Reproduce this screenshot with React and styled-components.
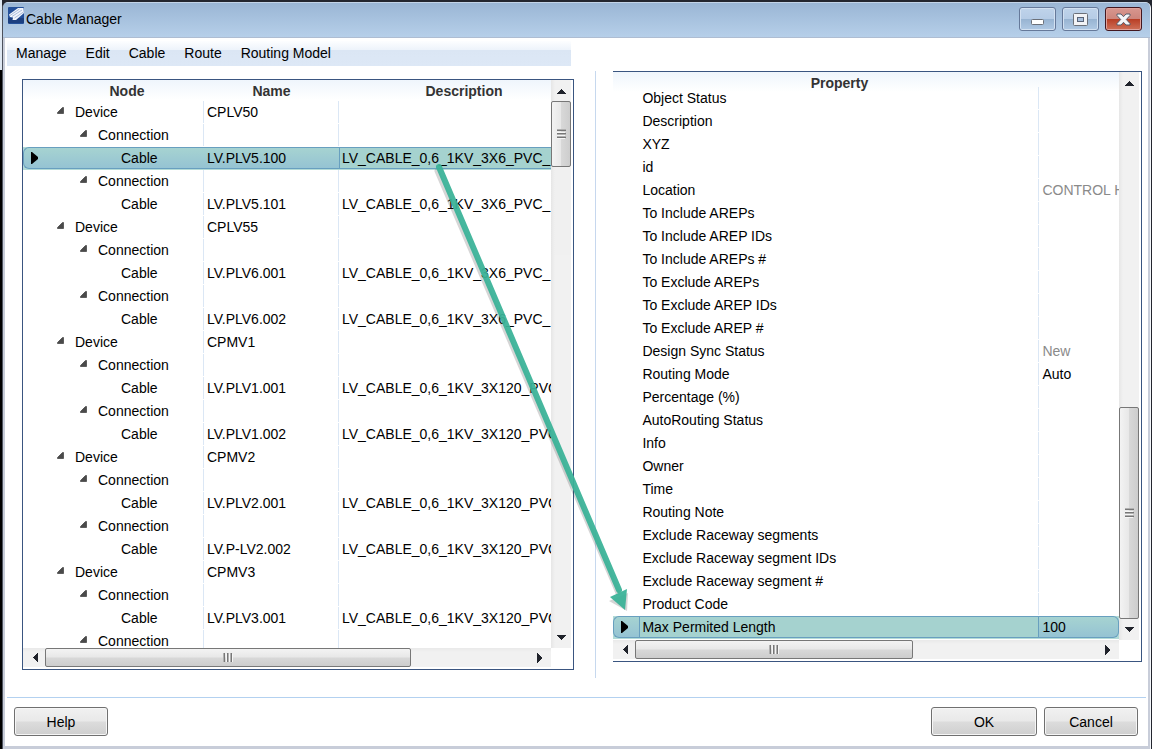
import React, { useState } from 'react';
import styled, { createGlobalStyle, css } from 'styled-components';

const GlobalStyle = createGlobalStyle`
  * {
    box-sizing: border-box;
  }

  body {
    margin: 0;
    font-family: 'Liberation Sans', Arial, sans-serif;
    font-size: 14px;
    color: #000;
  }

  button {
    font: inherit;
    color: inherit;
  }
`;

const Desktop = styled.div`
  height: 100vh;
  min-height: 400px;
  padding: 2px 1px 0 2px;
  background: linear-gradient(#dfe8f2 0 70px, #000 70px) left / 2px 100% no-repeat, #23262f;
`;

const Window = styled.div`
  height: 100%;
  display: flex;
  flex-direction: column;
  border-left: 1px solid #4c515c;
  border-right: 1px solid #f4f7fb;
  border-radius: 6px 6px 0 0;
  background: #c8cdd9;
  overflow: hidden;
`;

const TitleBar = styled.header`
  flex: none;
  height: 36px;
  display: flex;
  align-items: flex-start;
  padding: 4px 8px 0 5px;
  border-top: 1px solid #c3d4e8;
  border-bottom: 1px solid #aebdd2;
  background: linear-gradient(#9ab6d5, #b6cfe9);
`;

const Title = styled.h1`
  flex: 1;
  margin: 0;
  padding-left: 2px;
  font-size: 14px;
  font-weight: normal;
  line-height: 25px;
`;

const CaptionButtons = styled.div`
  display: flex;
  gap: 6px;
`;

const CaptionButton = styled.button`
  width: 37px;
  height: 24px;
  padding: 0;
  display: flex;
  align-items: center;
  justify-content: center;
  border: 1px solid ${({ $close }) => ($close ? '#43171f' : '#66799a')};
  border-radius: 3px;
  box-shadow: inset 0 0 0 1px ${({ $close }) => ($close ? '#dfa29c' : '#d3e1f1')};
  background: ${({ $close }) =>
    $close
      ? 'linear-gradient(#d8978f 0, #cd857c 48%, #b93f26 52%, #cf7159 100%)'
      : 'linear-gradient(#bfd3ea 0, #b6cce6 48%, #98b4d2 52%, #b0c9e4 100%)'};
`;

const Client = styled.div`
  flex: 1;
  min-height: 0;
  margin: 0 2px 3px;
  display: flex;
  flex-direction: column;
  background: #fff;
`;

const MenuBar = styled.nav`
  flex: none;
  width: calc(50% - 8px);
  height: 25px;
  margin: 3px 0 0 2px;
  display: flex;
  align-items: flex-start;
  gap: 1px;
  background: linear-gradient(#fdfeff 0, #edf3fb 9px, #dbe6f4 9px, #dde8f6 100%);
`;

const MenuItem = styled.button`
  height: 24px;
  padding: 0 9px;
  border: none;
  background: none;
  white-space: nowrap;
`;

const Workspace = styled.main`
  position: relative;
  flex: 1;
  min-height: 0;
  display: flex;
  padding: 5px 6px 19px 17px;
`;

const Splitter = styled.div`
  flex: none;
  width: 1px;
  margin: 0 17px 0 21px;
  background: #c6d8ee;
`;

const Panel = styled.section`
  flex: ${({ $grow }) => $grow} 1 0;
  min-width: 0;
  display: grid;
  grid-template-columns: minmax(0, 1fr) 20px;
  grid-template-rows: minmax(0, 1fr) 19px;
  margin: ${({ $low }) => ($low ? '8px 0' : '0 0 16px')};
  padding: 0 2px 2px 0;
  border: 1px solid #3a5580;
  ${({ $openLeft }) => $openLeft && 'border-left: none;'}
`;

const TableView = styled.div`
  overflow: hidden;
`;

const Table = styled.table`
  width: ${({ $width }) => $width};
  table-layout: fixed;
  border-collapse: separate;
  border-spacing: 0;
  background: linear-gradient(#eff5fc, #fff 20px) no-repeat;

  td,
  th {
    padding: 0;
  }
`;

const HeaderLabel = styled.div`
  height: ${({ $compact }) => ($compact ? 15 : 21)}px;
  padding-top: 2px;
  font-weight: bold;
  line-height: 18px;
  text-align: center;
  color: #333;
`;

const selectedCell = css`
  border: 0 solid #689fbf;
  border-width: 1px 0;
  line-height: 21px;
  background: ${({ $flat }) => ($flat ? '#a5d2cf' : 'linear-gradient(#a6d3d1, #95c3d3)')};
  ${({ $flat }) => $flat && 'border-left-width: 1px; border-right-width: 1px; padding-left: 2px;'}
  ${({ $start }) => $start && 'border-left-width: 1px; border-radius: 6px 0 0 6px;'}
  ${({ $end }) => $end && 'border-right-width: 1px; border-radius: 0 6px 6px 0;'}
`;

const Cell = styled.div`
  height: 22px;
  padding-left: ${({ $flush }) => ($flush ? 0 : 3)}px;
  line-height: 23px;
  white-space: nowrap;
  overflow: hidden;
  color: ${({ $muted }) => ($muted ? '#8a8a8a' : 'inherit')};
  ${({ $line }) => $line && 'border-right: 1px solid #dbe7f5;'}
  ${({ $selected }) => $selected && selectedCell}
`;

const Row = styled.tr`
  height: 23px;

  td {
    height: 23px;
    vertical-align: top;
    background: ${({ $selected }) => ($selected ? '#b3dbd7' : 'none')};
  }
`;

const NodeLabel = styled.span`
  display: flex;
  padding-left: ${({ $level }) => 6 + $level * 23}px;
`;

const Toggle = styled.button`
  width: 19px;
  padding: 0;
  display: flex;
  align-items: flex-start;
  border: none;
  background: none;

  svg {
    margin-top: 5px;
  }
`;

const ToggleSpace = styled.span`
  width: 19px;
`;

const Marker = styled.svg`
  display: block;
  margin: 4px 0 0 7px;
`;

const Bar = styled.div`
  display: flex;
  flex-direction: ${({ $vertical }) => ($vertical ? 'column' : 'row')};
  padding: ${({ $vertical }) => ($vertical ? '1px 0' : '0 2px')};
  background: ${({ $vertical }) =>
    $vertical ? 'linear-gradient(90deg, #e6e6e6, #f1f1f1 4px)' : 'linear-gradient(#e9e9e9, #f1f1f1 4px)'};
`;

const ArrowButton = styled.button`
  flex: 0 0 20px;
  min-height: 19px;
  padding: 0;
  display: flex;
  align-items: center;
  justify-content: center;
  border: none;
  background: none;
`;

const Track = styled.div`
  flex: ${({ $size }) => $size} 1 0;
`;

const Thumb = styled.div`
  flex: ${({ $size }) => $size} 1 0;
  display: flex;
  align-items: center;
  justify-content: center;
  border: 1px solid #777;
  border-radius: 2px;
  background: linear-gradient(
    ${({ $vertical }) => ($vertical ? '90deg' : '180deg')},
    #f3f3f3 0,
    #e8e8e8 48%,
    #d8d8d8 52%,
    #cdcdcd 100%
  );

  svg {
    transform: rotate(${({ $vertical }) => ($vertical ? 90 : 0)}deg);
  }
`;

const LinkArrow = styled.svg`
  position: absolute;
  left: 421px;
  top: 96px;
  pointer-events: none;
`;

const Footer = styled.footer`
  flex: none;
  display: flex;
  gap: 7px;
  margin: 0 2px;
  padding: 9px 8px 10px 7px;
  border-top: 1px solid #b3d1f0;
`;

const PushButton = styled.button`
  width: ${({ $wide }) => ($wide ? 106 : 94)}px;
  height: 29px;
  padding: 0;
  border: 1px solid #707070;
  border-radius: 3px;
  box-shadow: inset 0 0 0 1px #f6f6f6;
  background: linear-gradient(#f1f1f1 0, #e9e9e9 48%, #dcdcdc 52%, #cfcfcf 100%);
  ${({ $first }) => $first && 'margin-right: auto;'}
`;

const arrowShapes = {
  up: 'M4 0h1v1h1v1h1v1h1v1h1v1H0V4h1V3h1V2h1V1h1z',
  down: 'M0 0h9v1H8v1H7v1H6v1H5v1H4V4H3V3H2V2H1V1H0z',
  left: 'M5 0v9H4V8H3V7H2V6H1V5H0V4h1V3h1V2h1V1h1V0z',
  right: 'M0 0h1v1h1v1h1v1h1v1h1v2H4v1H3v1H2v1H1v1H0z',
};

const ScrollArrow = ({ dir }) => {
  const vertical = dir === 'up' || dir === 'down';
  return (
    <ArrowButton type="button" aria-label={`Scroll ${dir}`}>
      <svg width={vertical ? 9 : 5} height={vertical ? 5 : 10} fill="#20232b">
        <path d={arrowShapes[dir]} />
      </svg>
    </ArrowButton>
  );
};

const ScrollBar = ({ vertical, before, size, after }) => (
  <Bar $vertical={vertical}>
    <ScrollArrow dir={vertical ? 'up' : 'left'} />
    {before > 0 && <Track $size={before} />}
    <Thumb $size={size} $vertical={vertical}>
      <svg width="10" height="10">
        <path d="M3.500 1v8M6.500 1v8M9.500 1v8" stroke="#f6f6f6" />
        <path d="M1.500 0v9M4.500 0v9M8.500 0v9" stroke="#777" />
        <path d="M.5 0v9M5.500 0v9M7.500 0v9" stroke="#b0b0b0" />
      </svg>
    </Thumb>
    {after > 0 && <Track $size={after} />}
    <ScrollArrow dir={vertical ? 'down' : 'right'} />
  </Bar>
);

const RowMarker = () => (
  <Marker width="8" height="12">
    <path d="M0 0h1l6 5v2L1 12H0z" />
  </Marker>
);

const AppIcon = () => (
  <svg width="16" height="17" viewBox="0 0 16 17">
    <rect width="16" height="17" rx="1" fill="#24509a" />
    <path d="M0 11h16v5H0z" fill="#1c3f80" />
    <path d="M1 7.500 10 1h5.500L16 6l-8 7H4.500L5 10.500 2 10z" fill="#f2f5fb" />
    <path
      d="M2 8.500 11.500 2M4 9.500 14 3M6.500 11 15.500 5"
      stroke="#8ba2cc"
      strokeWidth=".7"
      fill="none"
    />
  </svg>
);

const nodes = [
  ['Device', 'CPLV50'],
  ['Connection'],
  ['Cable', 'LV.PLV5.100', 'LV_CABLE_0,6_1KV_3X6_PVC_'],
  ['Connection'],
  ['Cable', 'LV.PLV5.101', 'LV_CABLE_0,6_1KV_3X6_PVC_'],
  ['Device', 'CPLV55'],
  ['Connection'],
  ['Cable', 'LV.PLV6.001', 'LV_CABLE_0,6_1KV_3X6_PVC_'],
  ['Connection'],
  ['Cable', 'LV.PLV6.002', 'LV_CABLE_0,6_1KV_3X6_PVC_'],
  ['Device', 'CPMV1'],
  ['Connection'],
  ['Cable', 'LV.PLV1.001', 'LV_CABLE_0,6_1KV_3X120_PVC'],
  ['Connection'],
  ['Cable', 'LV.PLV1.002', 'LV_CABLE_0,6_1KV_3X120_PVC'],
  ['Device', 'CPMV2'],
  ['Connection'],
  ['Cable', 'LV.PLV2.001', 'LV_CABLE_0,6_1KV_3X120_PVC'],
  ['Connection'],
  ['Cable', 'LV.P-LV2.002', 'LV_CABLE_0,6_1KV_3X120_PVC'],
  ['Device', 'CPMV3'],
  ['Connection'],
  ['Cable', 'LV.PLV3.001', 'LV_CABLE_0,6_1KV_3X120_PVC'],
  ['Connection'],
];

const levels = { Device: 0, Connection: 1, Cable: 2 };

const properties = [
  ['Object Status'],
  ['Description'],
  ['XYZ'],
  ['id'],
  ['Location', 'CONTROL H', true],
  ['To Include AREPs'],
  ['To Include AREP IDs'],
  ['To Include AREPs #'],
  ['To Exclude AREPs'],
  ['To Exclude AREP IDs'],
  ['To Exclude AREP #'],
  ['Design Sync Status', 'New', true],
  ['Routing Mode', 'Auto'],
  ['Percentage (%)'],
  ['AutoRouting Status'],
  ['Info'],
  ['Owner'],
  ['Time'],
  ['Routing Note'],
  ['Exclude Raceway segments'],
  ['Exclude Raceway segment IDs'],
  ['Exclude Raceway segment #'],
  ['Product Code'],
  ['Max Permited Length', '100'],
];

const NodeTable = () => {
  const [selected, setSelected] = useState(2);

  return (
    <Table $width="566px">
      <colgroup>
        <col style={{ width: 27 }} />
        <col style={{ width: 154 }} />
        <col style={{ width: 135 }} />
        <col style={{ width: 250 }} />
      </colgroup>
      <thead>
        <tr>
          <th aria-label="Current row" />
          <th><HeaderLabel>Node</HeaderLabel></th>
          <th><HeaderLabel>Name</HeaderLabel></th>
          <th><HeaderLabel>Description</HeaderLabel></th>
        </tr>
      </thead>
      <tbody>
        {nodes.map(([type, name, description], i) => {
          const active = i === selected;
          return (
            <Row key={i} $selected={active} onClick={() => setSelected(i)}>
              <td>
                <Cell $flush $selected={active} $start>{active && <RowMarker />}</Cell>
              </td>
              <td>
                <Cell $flush $line $selected={active}>
                  <NodeLabel $level={levels[type]}>
                    {type === 'Cable' ? (
                      <ToggleSpace />
                    ) : (
                      <Toggle type="button" aria-label={`Collapse ${type}`}>
                        <svg width="9" height="9">
                          <path
                            d="M6.500 1.500h1v6h-6v-1z"
                            fill="#4a4a4a"
                            stroke="#5c5c5c"
                            strokeLinejoin="round"
                          />
                        </svg>
                      </Toggle>
                    )}
                    {type}
                  </NodeLabel>
                </Cell>
              </td>
              <td><Cell $line $selected={active}>{name}</Cell></td>
              <td><Cell $selected={active} $flat>{description}</Cell></td>
            </Row>
          );
        })}
      </tbody>
    </Table>
  );
};

const PropertyTable = () => {
  const [selected, setSelected] = useState(properties.length - 1);

  return (
    <Table $width="100%">
      <colgroup>
        <col style={{ width: 26 }} />
        <col style={{ width: 400 }} />
        <col />
      </colgroup>
      <thead>
        <tr>
          <th aria-label="Current row" />
          <th><HeaderLabel $compact>Property</HeaderLabel></th>
          <th aria-label="Value" />
        </tr>
      </thead>
      <tbody>
        {properties.map(([label, value, muted], i) => {
          const active = i === selected;
          return (
            <Row key={label} $selected={active} onClick={() => setSelected(i)}>
              <td>
                <Cell $flush $selected={active} $start>{active && <RowMarker />}</Cell>
              </td>
              <td><Cell $line $selected={active} $flat>{label}</Cell></td>
              <td><Cell $muted={muted} $selected={active} $end>{value}</Cell></td>
            </Row>
          );
        })}
      </tbody>
    </Table>
  );
};

const App = () => (
  <>
    <GlobalStyle />
    <Desktop>
      <Window>
        <TitleBar>
          <AppIcon />
          <Title>Cable Manager</Title>
          <CaptionButtons>
            <CaptionButton type="button" aria-label="Minimize">
              <svg width="15" height="15">
                <rect x="1.500" y="7.500" width="12" height="5" rx="1" fill="#fff" stroke="#6b7079" />
              </svg>
            </CaptionButton>
            <CaptionButton type="button" aria-label="Maximize">
              <svg width="15" height="13">
                <rect x=".5" y=".5" width="14" height="12" rx="1" fill="#f2f3f6" stroke="#6b7079" />
                <rect x="4.500" y="4.500" width="6" height="4" fill="#a9c1de" stroke="#596377" />
              </svg>
            </CaptionButton>
            <CaptionButton type="button" aria-label="Close" $close>
              <svg width="15" height="13" viewBox="0 0 15 13">
                <path
                  d="M1 1h4l2.500 2.700L10 1h4v1.500L10.300 6.500 14 10.500V12h-4L7.500 9.300 5 12H1v-1.500l3.700-4L1 2.500z"
                  fill="#f5f6f8"
                  stroke="#565d6b"
                />
              </svg>
            </CaptionButton>
          </CaptionButtons>
        </TitleBar>
        <Client>
          <MenuBar>
            {['Manage', 'Edit', 'Cable', 'Route', 'Routing Model'].map((item) => (
              <MenuItem key={item} type="button">{item}</MenuItem>
            ))}
          </MenuBar>
          <Workspace>
            <Panel $grow={552} $low>
              <TableView><NodeTable /></TableView>
              <ScrollBar vertical before={0} size={64} after={461} />
              <ScrollBar before={0} size={364} after={119} />
            </Panel>
            <Splitter />
            <Panel $grow={529} $openLeft>
              <TableView><PropertyTable /></TableView>
              <ScrollBar vertical before={314} size={210} after={0} />
              <ScrollBar before={0} size={276} after={185} />
            </Panel>
            <LinkArrow width="210" height="460">
              <g opacity=".2" fill="#333" stroke="#333">
                <path d="M11 9 192 431" strokeWidth="5" strokeLinecap="round" />
                <path d="M183 439l19-8-1 18z" stroke="none" />
              </g>
              <g opacity=".94" fill="#3bb398" stroke="#3bb398">
                <path d="M13 5 193 428" strokeWidth="6" strokeLinecap="round" />
                <path d="M184 435l17-8-2 21z" stroke="none" />
              </g>
            </LinkArrow>
          </Workspace>
          <Footer>
            <PushButton type="button" $first>Help</PushButton>
            <PushButton type="button" $wide>OK</PushButton>
            <PushButton type="button">Cancel</PushButton>
          </Footer>
        </Client>
      </Window>
    </Desktop>
  </>
);

export default App;
